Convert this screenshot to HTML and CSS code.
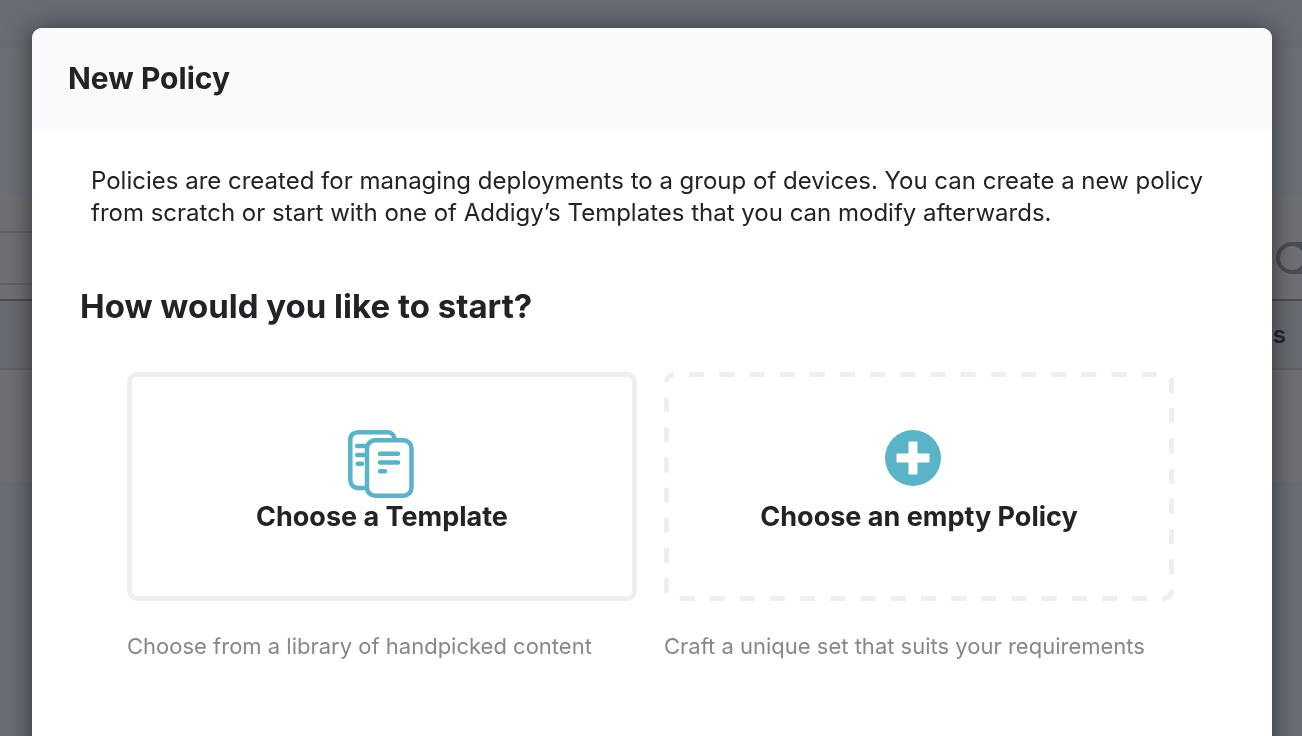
FILE: index.html
```html
<!DOCTYPE html>
<html lang="en">
<head>
<meta charset="utf-8">
<title>New Policy</title>
<link rel="stylesheet" href="styles.css">
</head>
<body>
<div class="page" aria-hidden="true">
  <div class="page-top"></div>
  <div class="page-hero"></div>
  <div class="page-tools">
    <div class="page-search"></div>
    <div class="page-toggle"><div class="page-knob"></div></div>
  </div>
  <div class="page-head">s</div>
  <div class="page-row"></div>
</div>
<section class="modal" role="dialog" aria-labelledby="modal-title">
  <header class="modal-header">
    <h1 class="modal-title" id="modal-title">New Policy</h1>
  </header>
  <div class="modal-body">
    <p class="intro">Policies are created for managing deployments to a group of devices. You can create a new policy from scratch or start with one of Addigy’s Templates that you can modify afterwards.</p>
    <h2 class="question">How would you like to start?</h2>
    <div class="options">
      <div class="option">
        <button class="card card-solid" type="button" aria-describedby="template-note">
          <svg class="icon icon-template" viewBox="0 0 68 70" aria-hidden="true">
            <g fill="none" stroke="#5bb3c7" stroke-width="4.500" stroke-linecap="round">
              <path d="M46.500 9.500C46 5.500 43 3.200 39.500 3.200H10.500C5.500 3.200 2.300 6 2.300 11V50.500C2.300 55.500 5.500 59 10.500 59H17.500"/>
              <path d="M9.200 17H17.500M9.200 26H17.500M9.700 34.700H14"/>
              <rect x="19" y="11.300" width="44.500" height="55.500" rx="8"/>
              <path d="M32 24.700H50M32 33.500H50M32 42.200H37"/>
            </g>
          </svg>
          <span>Choose a Template</span>
        </button>
        <p class="note" id="template-note">Choose from a library of handpicked content</p>
      </div>
      <div class="option">
        <button class="card card-dashed" type="button" aria-describedby="empty-note">
          <svg class="dashes" aria-hidden="true"><rect x="2.500" y="2.500" rx="7.500"/></svg>
          <svg class="icon icon-plus" viewBox="0 0 56 56" aria-hidden="true">
            <circle cx="28" cy="28" r="28" fill="#5bb3c7"/>
            <path d="M24.500 11.500h7a1 1 0 0 1 1 1v11h11a1 1 0 0 1 1 1v7a1 1 0 0 1-1 1h-11v11a1 1 0 0 1-1 1h-7a1 1 0 0 1-1-1v-11h-11a1 1 0 0 1-1-1v-7a1 1 0 0 1 1-1h11v-11a1 1 0 0 1 1-1z" fill="#fff"/>
          </svg>
          <span>Choose an empty Policy</span>
        </button>
        <p class="note" id="empty-note">Craft a unique set that suits your requirements</p>
      </div>
    </div>
  </div>
</section>
</body>
</html>
```
FILE: styles.css
```css
* { box-sizing: border-box; }
body {
  margin: 0;
  height: 100vh;
  overflow: hidden;
  background: #6a6d75;
  color: #222326;
  font-family: Inter, "Liberation Sans", sans-serif;
}
h1, h2, p { margin: 0; }

.page-top { height: 48px; background: #696c74; }
.page-hero { height: 147px; background: #6b6f76; }
.page-tools {
  display: flex;
  justify-content: space-between;
  height: 106px;
  padding-top: 36px;
  background: #6f7075;
  border-bottom: 2px solid #484b52;
}
.page-search {
  width: 300px;
  height: 54px;
  border: solid #606165;
  border-width: 2px 0;
}
.page-toggle {
  width: 56px;
  height: 32px;
  margin: 11px -30px 0 0;
  padding: 4px;
  background: #4a4d56;
  border-radius: 16px;
}
.page-knob {
  width: 24px;
  height: 24px;
  border-radius: 50%;
  background: #6f7075;
}
.page-head {
  height: 69px;
  padding: 18px 16px 0 0;
  background: #686b72;
  border-bottom: 2px solid #606165;
  color: #25272c;
  font-size: 24px;
  font-weight: 600;
  line-height: 32px;
  text-align: right;
}
.page-row { height: 112px; background: #6f7075; }

.modal {
  position: fixed;
  inset: 28px 30px -40px 32px;
  overflow: hidden;
  background: #fff;
  border-radius: 10px;
  box-shadow: 0 2px 26px rgba(0, 0, 0, .55);
}
.modal-header {
  padding: 30px 36px 31px;
  background: #f9fafc;
}
.modal-title { font-size: 30px; font-weight: 700; line-height: 40px; }
.modal-body { padding: 36px 48px; }
.intro { padding: 0 11px; font-size: 24px; line-height: 32px; }
.question {
  margin-top: 55px;
  font-size: 33px;
  font-weight: 700;
  line-height: 44px;
}
.options {
  display: grid;
  grid-template-columns: 1fr 1fr;
  gap: 27px;
  margin: 44px 50px 0 47px;
}
.card {
  position: relative;
  display: flex;
  flex-direction: column;
  align-items: center;
  width: 100%;
  height: 229px;
  padding: 57px 0 0;
  border: 0;
  border-radius: 10px;
  background: #fff;
  color: inherit;
  font: 700 27px/36px Inter, "Liberation Sans", sans-serif;
  cursor: pointer;
}
.card-solid { box-shadow: inset 0 0 0 5px #eeeff1; }
.dashes {
  position: absolute;
  inset: 0;
  width: 100%;
  height: 100%;
}
.dashes rect {
  width: calc(100% - 5px);
  height: calc(100% - 5px);
  fill: none;
  stroke: #eeeff1;
  stroke-width: 5px;
  stroke-dasharray: 15 15.17;
  stroke-dashoffset: 15;
}
.icon { display: block; flex: none; }
.icon-template { width: 68px; height: 70px; }
.icon-plus { width: 56px; height: 56px; margin: 1px 12px 13px 0; }
.note {
  margin-top: 29px;
  color: #86888e;
  font-size: 22px;
  line-height: 32px;
  white-space: nowrap;
}
```
